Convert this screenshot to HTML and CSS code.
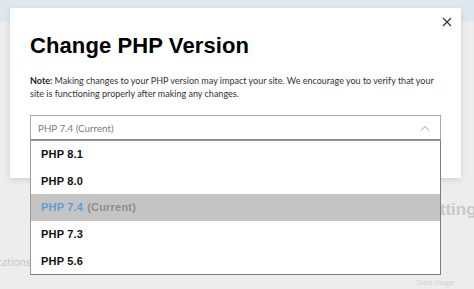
FILE: index.html
```html
<!DOCTYPE html>
<html lang="en">
<head>
  <meta charset="UTF-8" />
  <title>Change PHP Version</title>
  <link rel="stylesheet" href="styles.css">
</head>
<body>
  <div class="page">
    <div class="topbar"></div>
    <div class="page-body">
      <div class="side">
        <span class="side-text">cations</span>
      </div>
      <div class="main">
        <span class="main-heading">Settings</span>
        <span class="main-small">Data Usage</span>
      </div>
    </div>
  </div>

  <div class="modal">
    <button class="modal-close" aria-label="Close">
      <svg width="10" height="10" viewBox="0 0 10 10"><path d="M1 1 L9 9 M9 1 L1 9" stroke="#333" stroke-width="1.2" fill="none"/></svg>
    </button>
    <h1 class="modal-title">Change PHP Version</h1>
    <p class="modal-note"><strong>Note:</strong> Making changes to your PHP version may impact your site. We encourage you to verify that your site is functioning properly after making any changes.</p>

    <div class="select">
      <div class="select-box">
        <span>PHP 7.4 (Current)</span>
        <svg width="10" height="6" viewBox="0 0 10 6"><path d="M1 5.5 L5 1.5 L9 5.5" stroke="#999" stroke-width="1" fill="none"/></svg>
      </div>
      <ul class="select-list">
        <li class="option">PHP 8.1</li>
        <li class="option">PHP 8.0</li>
        <li class="option option-active"><span class="ver">PHP 7.4</span> <span class="cur">(Current)</span></li>
        <li class="option">PHP 7.3</li>
        <li class="option">PHP 5.6</li>
      </ul>
    </div>
  </div>
</body>
</html>
```

FILE: styles.css
```css
body {
  margin: 0;
  background-color: #ededed;
  font-family: 'Liberation Sans', Arial, sans-serif;
  overflow: hidden;
}

.page {
  height: 289px;
  display: flex;
  flex-direction: column;
}

.topbar {
  height: 22px;
  background-color: #dfe8ee;
}

.page-body {
  flex: 1;
  display: flex;
}

.side {
  width: 40px;
  display: flex;
  align-items: flex-end;
  padding-bottom: 20px;
}

.side-text {
  font-family: 'Open Sans', sans-serif;
  font-size: 10px;
  color: #c4c4c4;
  margin-left: -3px;
}

.main {
  flex: 1;
  display: flex;
  flex-direction: column;
  align-items: flex-end;
  padding-top: 178px;
}

.main-heading {
  font-size: 17px;
  font-weight: bold;
  color: #c9c9c9;
  margin-right: -12px;
}

.main-small {
  font-family: 'Open Sans', sans-serif;
  font-size: 7px;
  color: #cfcfcf;
  margin-top: 58px;
  margin-right: 20px;
}

.modal {
  position: absolute;
  left: 10px;
  top: 8px;
  width: 451px;
  height: 170px;
  box-sizing: border-box;
  padding: 25px 20px 0 20px;
  background-color: #fff;
  box-shadow: 0 2px 6px rgba(0, 0, 0, 0.12);
}

.modal-close {
  position: absolute;
  top: 9px;
  right: 9px;
  width: 10px;
  height: 10px;
  padding: 0;
  border: none;
  background: none;
  display: flex;
}

.modal-title {
  margin: 0;
  font-size: 22px;
  line-height: 26px;
  font-weight: bold;
  color: #000;
  letter-spacing: 0.1px;
}

.modal-note {
  margin: 15px 0 0 0;
  font-family: 'Lato', sans-serif;
  font-size: 9px;
  line-height: 13px;
  color: #333;
}

.modal-note strong {
  font-weight: bold;
  color: #222;
}

.select {
  position: relative;
  margin-top: 15px;
  width: 411px;
}

.select-box {
  height: 25px;
  box-sizing: border-box;
  border: 1px solid #a9a9a9;
  border-bottom-color: #8a8a8a;
  display: flex;
  align-items: center;
  justify-content: space-between;
  padding: 0 10px 0 7px;
  font-family: 'Lato', sans-serif;
  font-size: 9.8px;
  color: #7a7a7a;
}

.select-list {
  position: absolute;
  left: 0;
  top: 25px;
  width: 411px;
  box-sizing: border-box;
  margin: 0;
  padding: 0;
  list-style: none;
  background-color: #fff;
  border: 1px solid #9a9a9a;
  border-right-color: #7c7c7c;
  border-bottom-color: #7c7c7c;
}

.option {
  height: 26.6px;
  display: flex;
  align-items: center;
  padding-left: 10px;
  font-size: 11px;
  font-weight: bold;
  color: #111;
  letter-spacing: 0.2px;
}

.option-active {
  background-color: #c4c4c4;
  gap: 4px;
}

.option-active .ver {
  color: #5b9fd6;
}

.option-active .cur {
  color: #8e8e8e;
}
```
